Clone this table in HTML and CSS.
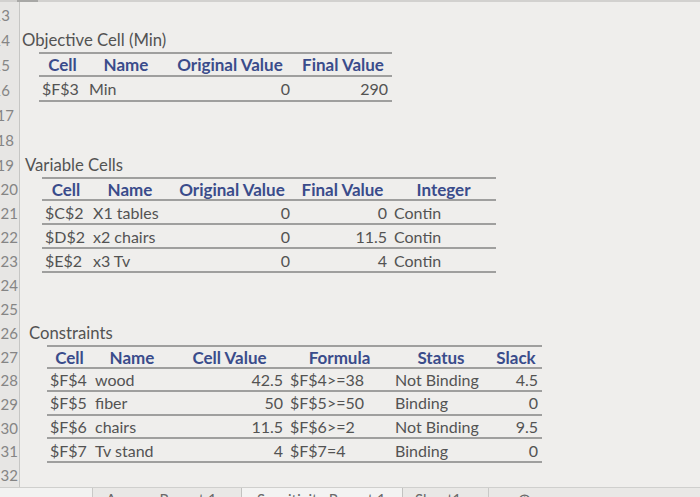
FILE: index.html
```html
<!DOCTYPE html>
<html>
<head>
<meta charset="utf-8">
<link rel="stylesheet" href="styles.css">
</head>
<body>
<div class="topbar"><span class="corner"></span></div>
<div class="sheet">
  <div class="rownums">
    <div class="rn h25 far">13</div>
    <div class="rn h25 far">14</div>
    <div class="rn h25 far">15</div>
    <div class="rn h25 far">16</div>
    <div class="rn h25 mid">17</div>
    <div class="rn h25 mid">18</div>
    <div class="rn h25 mid">19</div>
    <div class="rn h24">20</div>
    <div class="rn h24">21</div>
    <div class="rn h24">22</div>
    <div class="rn h24">23</div>
    <div class="rn h24">24</div>
    <div class="rn h24">25</div>
    <div class="rn h24">26</div>
    <div class="rn h23">27</div>
    <div class="rn h23">28</div>
    <div class="rn h23">29</div>
    <div class="rn h23">30</div>
    <div class="rn h23">31</div>
    <div class="rn h23">32</div>
  </div>
  <div class="cells">
    <div class="row h25"></div>
    <div class="row h25 title t-obj">Objective Cell (Min)</div>
    <div class="tr obj head h25">
      <span class="c">Cell</span><span class="c">Name</span><span class="c">Original Value</span><span class="c">Final Value</span>
    </div>
    <div class="tr obj h25">
      <span class="l">$F$3</span><span class="l">Min</span><span class="r">0</span><span class="r">290</span>
    </div>
    <div class="row h25"></div>
    <div class="row h25"></div>
    <div class="row h25 title t-var">Variable Cells</div>
    <div class="tr var head h24">
      <span class="c">Cell</span><span class="c">Name</span><span class="c">Original Value</span><span class="c">Final Value</span><span class="c">Integer</span>
    </div>
    <div class="tr var h24">
      <span class="l">$C$2</span><span class="l">X1 tables</span><span class="r">0</span><span class="r">0</span><span class="l">Contin</span>
    </div>
    <div class="tr var h24">
      <span class="l">$D$2</span><span class="l">x2 chairs</span><span class="r">0</span><span class="r">11.5</span><span class="l">Contin</span>
    </div>
    <div class="tr var h24">
      <span class="l">$E$2</span><span class="l">x3 Tv</span><span class="r">0</span><span class="r">4</span><span class="l">Contin</span>
    </div>
    <div class="row h24"></div>
    <div class="row h24"></div>
    <div class="row h24 title t-con">Constraints</div>
    <div class="tr con head h23">
      <span class="c">Cell</span><span class="c">Name</span><span class="c">Cell Value</span><span class="c">Formula</span><span class="c">Status</span><span class="c">Slack</span>
    </div>
    <div class="tr con h23">
      <span class="l">$F$4</span><span class="l">wood</span><span class="r">42.5</span><span class="l">$F$4&gt;=38</span><span class="l">Not Binding</span><span class="r">4.5</span>
    </div>
    <div class="tr con h23">
      <span class="l">$F$5</span><span class="l">fiber</span><span class="r">50</span><span class="l">$F$5&gt;=50</span><span class="l">Binding</span><span class="r">0</span>
    </div>
    <div class="tr con h23">
      <span class="l">$F$6</span><span class="l">chairs</span><span class="r">11.5</span><span class="l">$F$6&gt;=2</span><span class="l">Not Binding</span><span class="r">9.5</span>
    </div>
    <div class="tr con h23">
      <span class="l">$F$7</span><span class="l">Tv stand</span><span class="r">4</span><span class="l">$F$7=4</span><span class="l">Binding</span><span class="r">0</span>
    </div>
    <div class="row h23"></div>
  </div>
</div>
<div class="tabs">
  <div class="tab blank"></div>
  <div class="tab t1">Answer Report 1</div>
  <div class="tab t2">Sensitivity Report 1</div>
  <div class="tab t3">Sheet1</div>
  <div class="tab t4">⊕</div>
</div>
</body>
</html>
```

FILE: styles.css
```css
html, body {
  margin: 0;
  padding: 0;
}
body {
  width: 700px;
  height: 497px;
  overflow: hidden;
  background: #efeeec;
  font-family: Lato, "Open Sans", "Liberation Sans", sans-serif;
  font-size: 16px;
  color: #535353;
}
.topbar {
  display: flex;
  height: 2px;
  background: #d2d1cf;
}
.corner {
  margin-left: 17px;
  width: 21px;
  background: #a8a8a6;
}
.sheet {
  display: flex;
}
.rownums {
  flex: none;
  width: 19px;
  background: #e7e6e4;
  border-right: 1px solid #c6c6c4;
  color: #858585;
  font-size: 15px;
}
.rn {
  display: flex;
  align-items: center;
  justify-content: flex-end;
  padding-right: 1px;
  white-space: nowrap;
}
.rn.far { padding-right: 9px; }
.rn.mid { padding-right: 5px; }
.cells {
  flex: 1;
  display: flex;
  flex-direction: column;
}
.h25 { height: 25px; }
.h24 { height: 24px; }
.h23 { height: 23.6px; }
.row, .tr {
  box-sizing: border-box;
}
.title {
  display: flex;
  align-items: center;
  white-space: nowrap;
  font-size: 16.7px;
}
.t-obj { padding-left: 2px; }
.t-var { padding-left: 5px; }
.t-con { padding-left: 9px; }
.tr {
  display: grid;
  align-items: center;
  border-bottom: 2px solid #9f9f9e;
  white-space: nowrap;
}
.tr.head {
  border-top: 2px solid #9f9f9e;
  color: #3a4c8b;
  font-weight: 700;
  font-size: 17px;
}
.obj {
  margin-left: 19px;
  width: 353px;
  grid-template-columns: 47px 80px 128px 98px;
}
.var {
  margin-left: 22px;
  width: 454px;
  grid-template-columns: 48px 80px 124px 97px 105px;
}
.con {
  margin-left: 27px;
  width: 495px;
  grid-template-columns: 45px 80px 115px 105px 98px 52px;
}
.c { text-align: center; }
.l { text-align: left; padding-left: 3px; }
.r { text-align: right; padding-right: 4px; }
.tabs {
  display: flex;
  height: 12px;
  box-sizing: border-box;
  border-top: 1px solid #cfcfcd;
  background: #e9e8e6;
  color: #6a6a6a;
  font-size: 15px;
  line-height: 18px;
  white-space: nowrap;
}
.tab {
  padding-top: 2px;
}
.blank {
  width: 92px;
  background: #f2f2f1;
  border-right: 1px solid #c9c9c7;
  padding: 0;
}
.t1 {
  width: 135px;
  padding-left: 13px;
}
.t2 {
  width: 145px;
  padding-left: 15px;
  background: #f3f3f2;
  border-left: 1px solid #c2c2c0;
  border-right: 1px solid #c2c2c0;
}
.t3 {
  width: 73px;
  padding-left: 12px;
  border-right: 1px solid #c9c9c7;
}
.t4 {
  padding-left: 28px;
  font-size: 18px;
}
```
